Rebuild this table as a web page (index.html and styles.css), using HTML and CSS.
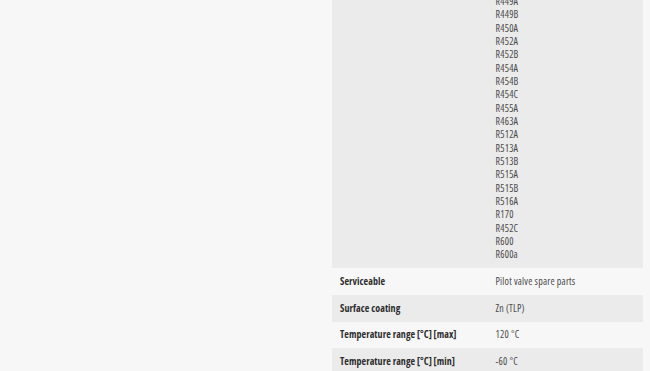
FILE: index.html
```html
<!DOCTYPE html>
<html lang="en">
<head>
<meta charset="utf-8">
<title>Specifications</title>
<link rel="stylesheet" href="styles.css">
</head>
<body>
<div class="page">
  <div class="spacer"></div>
  <div class="specs">
    <table class="spec-table">
      <tbody>
        <tr class="row shaded">
          <th class="label"></th>
          <td class="value">
            <ul class="list">
              <li>R449A</li><li>R449B</li><li>R450A</li><li>R452A</li><li>R452B</li>
              <li>R454A</li><li>R454B</li><li>R454C</li><li>R455A</li><li>R463A</li>
              <li>R512A</li><li>R513A</li><li>R513B</li><li>R515A</li><li>R515B</li>
              <li>R516A</li><li>R170</li><li>R452C</li><li>R600</li><li>R600a</li>
            </ul>
          </td>
        </tr>
        <tr class="row">
          <th class="label">Serviceable</th>
          <td class="value">Pilot valve spare parts</td>
        </tr>
        <tr class="row shaded">
          <th class="label">Surface coating</th>
          <td class="value">Zn (TLP)</td>
        </tr>
        <tr class="row">
          <th class="label">Temperature range [°C] [max]</th>
          <td class="value">120 °C</td>
        </tr>
        <tr class="row shaded">
          <th class="label">Temperature range [°C] [min]</th>
          <td class="value">-60 °C</td>
        </tr>
      </tbody>
    </table>
  </div>
</div>
</body>
</html>
```

FILE: styles.css
```css
html, body {
  margin: 0;
  padding: 0;
  background: #f7f7f7;
}

body {
  font-family: "Open Sans", "Noto Sans", sans-serif;
  font-stretch: 75%;
  font-size: 10px;
  letter-spacing: 0.15px;
  line-height: 13.33px;
  color: #4a4a4a;
  overflow: hidden;
  height: 371px;
}

.page {
  display: flex;
  width: 650px;
  margin-top: -11.67px;
}

.spacer {
  width: 332px;
  flex: none;
}

.specs {
  width: 311px;
  flex: none;
}

.spec-table {
  width: 100%;
  border-collapse: collapse;
  table-layout: fixed;
}

.row {
  background: #f7f7f7;
}

.row.shaded {
  background: #ebebeb;
}

.label,
.value {
  padding: 6.67px 8px;
  text-align: left;
  vertical-align: top;
  width: 50%;
}

.label {
  font-weight: 700;
  color: #2e2e2e;
  letter-spacing: 0.05px;
}

.value {
  font-weight: 400;
  color: #4a4a4a;
  letter-spacing: 0.2px;
}

.list {
  list-style: none;
  margin: 0;
  padding: 0;
}
```
